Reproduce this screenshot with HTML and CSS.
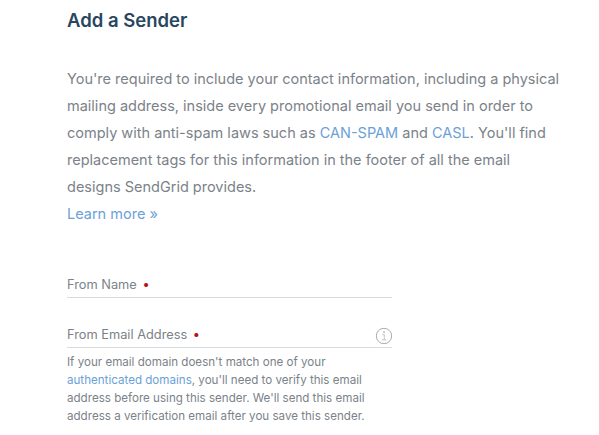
FILE: index.html
```html
<!DOCTYPE html>
<html lang="en">
<head>
<meta charset="utf-8">
<title>Add a Sender</title>
<link rel="stylesheet" href="styles.css">
</head>
<body>
<main class="page">
  <h1 class="title">Add a Sender</h1>
  <p class="intro">You're required to include your contact information, including a physical mailing address, inside every promotional email you send in order to comply with anti-spam laws such as <a href="#">CAN-SPAM</a> and <a href="#">CASL</a>. You'll find replacement tags for this information in the footer of all the email designs SendGrid provides.<br><a href="#">Learn more »</a></p>
  <form class="form">
    <div class="field field-name">
      <label class="label">From Name <span class="req">•</span></label>
    </div>
    <div class="field field-email">
      <label class="label">From Email Address <span class="req">•</span></label>
      <svg class="info" width="18" height="18" viewBox="0 0 18 18" aria-hidden="true"><circle cx="9" cy="9" r="7.7" fill="none" stroke="#a9adb1" stroke-width="1"/><path d="M7.4 7.7h1.9v5.1M7 12.8h4.2M8.5 4.6h1v1.2h-1z" fill="none" stroke="#a9adb1" stroke-width="0.7"/></svg>
    </div>
    <p class="help">If your email domain doesn't match one of your <a href="#">authenticated domains</a>, you'll need to verify this email address before using this sender. We'll send this email address a verification email after you save this sender.</p>
  </form>
</main>
</body>
</html>
```

FILE: styles.css
```css
html, body { margin: 0; padding: 0; background: #fff; }
body { font-family: Inter, "Liberation Sans", sans-serif; color: #7b8289; overflow: hidden; height: 435px; }
.page { width: 500px; padding: 8px 0 0 67px; }
.title { margin: 0; font-size: 18.5px; line-height: 24px; font-weight: 600; color: #294661; }
.intro { margin: 33px 0 0; font-size: 14.5px; line-height: 27px; color: #7b8289; }
a { color: #6ba1d8; text-decoration: none; }
.form { margin-top: 46px; width: 325px; }
.field { display: flex; justify-content: space-between; align-items: flex-end; border-bottom: 1px solid #d9dbde; box-sizing: border-box; }
.field-name { height: 25px; margin-bottom: 23px; padding-bottom: 3px; }
.field-email { height: 27px; padding-bottom: 0; }
.label { font-size: 12.8px; line-height: 18px; color: #7b8289; }
.field-email .label { padding-bottom: 3px; }
.req { color: #b5121b; margin-left: 2px; }
.info { display: block; margin-bottom: 2px; margin-right: -1px; }
.help { margin: 5px 0 0; font-size: 11.6px; line-height: 18px; color: #7b8289; }
```
